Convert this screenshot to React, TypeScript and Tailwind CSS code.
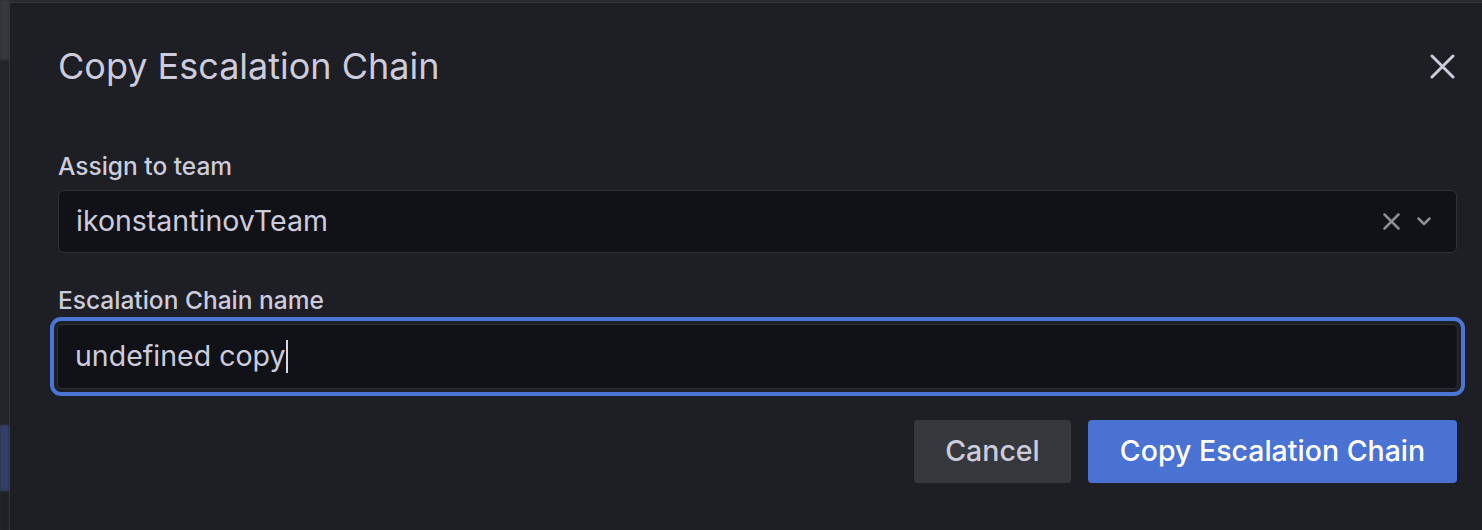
export default function App() {
  return (
    <div className="flex w-[1482px] h-[530px] overflow-hidden bg-[#2a2b2f] font-['Inter',sans-serif]">
      {/* blurred page behind the modal */}
      <div className="flex flex-col w-[9px] shrink-0 blur-[1px]">
        <div className="h-[60px] bg-[#38393d]" />
        <div className="h-[365px] bg-[#232428]" />
        <div className="h-[66px] bg-[#33406a]" />
        <div className="flex-1 bg-[#202125]" />
      </div>

      {/* Modal */}
      <div className="flex-1 mt-[2px] border-l border-t border-[#35363b] bg-[#1e1f24] pl-[48px] pr-[25px]">
        <div className="flex items-center justify-between pt-[43px]">
          <h1 className="text-[36px] leading-[40px] text-[#ccccdc] font-normal">Copy Escalation Chain</h1>
          <button className="mr-[2px] text-[#ccccdc]" aria-label="Close">
            <svg width="25" height="25" viewBox="0 0 25 25" fill="none" stroke="currentColor" strokeWidth="3" strokeLinecap="round">
              <path d="M2 2L23 23M23 2L2 23" />
            </svg>
          </button>
        </div>

        <div className="mt-[66px]">
          <label className="block text-[24.5px] leading-[28px] font-medium text-[#ccccdc]">Assign to team</label>
          <div className="mt-[10px] flex items-center h-[63px] rounded-[6px] border border-[#303136] bg-[#111217] pl-[17px] pr-[25px]">
            <span className="flex-1 text-[28.5px] text-[#ccccdc]">ikonstantinovTeam</span>
            <svg width="17" height="17" viewBox="0 0 17 17" fill="none" stroke="#8d8e94" strokeWidth="2.5" strokeLinecap="round" className="mr-[17px]">
              <path d="M1.5 1.5L15.5 15.5M15.5 1.5L1.5 15.5" />
            </svg>
            <svg width="14" height="9" viewBox="0 0 14 9" fill="none" stroke="#8d8e94" strokeWidth="2.5" strokeLinecap="round" strokeLinejoin="round">
              <path d="M1.5 1.5L7 7L12.5 1.5" />
            </svg>
          </div>
        </div>

        <div className="mt-[33px]">
          <label className="block text-[24.5px] leading-[28px] font-medium text-[#ccccdc]">Escalation Chain name</label>
          <div className="mt-[3px] -mx-[8px] rounded-[11px] border-[4px] border-[#4b76d6] p-[3px]">
            <div className="flex items-center h-[65px] rounded-[5px] border border-[#303136] bg-[#111217] pl-[17px]">
              <span className="text-[28.5px] text-[#ccccdc]">undefined copy</span>
              <span className="ml-[1px] w-[2px] h-[33px] bg-[#d8d8e4]" />
            </div>
          </div>
        </div>

        <div className="mt-[24px] flex justify-end gap-[17px]">
          <button className="h-[63px] w-[157px] rounded-[4px] bg-[#37383e] text-[28.5px] font-medium text-[#ccccdc]">
            Cancel
          </button>
          <button className="h-[63px] w-[369px] rounded-[4px] bg-[#4a72d3] text-[28.5px] font-medium text-white">
            Copy Escalation Chain
          </button>
        </div>
      </div>
    </div>
  );
}
